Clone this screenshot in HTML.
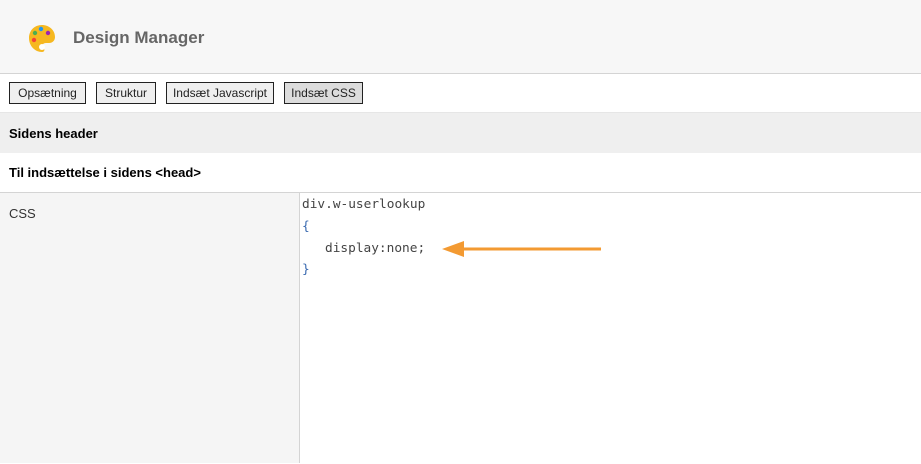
<!DOCTYPE html>
<html><head><style>
body{margin:0;width:921px;height:463px;overflow:hidden;font-family:"Liberation Sans",sans-serif;background:#fff;position:relative}
.hdr{position:absolute;left:0;top:0;width:921px;height:73px;background:#f7f7f7;border-bottom:1px solid #d4d4d4}
.title{position:absolute;left:73px;top:28px;font-size:17px;font-weight:bold;color:#666}
.btn{position:absolute;top:82px;height:20px;border:1px solid #222;background:#efefef;font-size:12px;line-height:20px;text-align:center;color:#222}
.band{position:absolute;left:0;top:112px;width:921px;height:40px;background:#efefef;border-top:1px solid #e6e6e6}
.lbl{position:absolute;left:9px;font-size:13px;font-weight:bold;color:#000}
.row{position:absolute;left:0;top:192px;width:921px;height:271px;border-top:1px solid #d4d4d4}
.left{position:absolute;left:0;top:193px;width:299px;height:270px;background:#f5f5f5;border-right:1px solid #d4d4d4}
.code{position:absolute;left:302px;font-family:"DejaVu Sans Mono","Liberation Mono",monospace;font-size:12.8px;color:#444}
</style></head><body>
<div class="hdr"></div>
<svg style="position:absolute;left:28px;top:24px" width="28" height="30" viewBox="0 0 28 30">
<path d="M14 1C6 1 1 7 1 14c0 8 6 14 13 14 3 0 3-3 1-5-1-2 0-4 3-4h3c4 0 6-3 6-6C27 6 21 1 14 1z" fill="#f6b820"/>
<circle cx="14" cy="23" r="3" fill="#fff"/>
<circle cx="7" cy="9" r="2.2" fill="#4caf50"/>
<circle cx="13" cy="5" r="2.2" fill="#2196f3"/>
<circle cx="20" cy="9" r="2.2" fill="#9c27b0"/>
<circle cx="6" cy="16" r="2.2" fill="#f44336"/>
</svg>
<div class="title">Design Manager</div>
<div class="btn" style="left:9px;width:75px">Opsætning</div>
<div class="btn" style="left:96px;width:58px">Struktur</div>
<div class="btn" style="left:166px;width:106px">Indsæt Javascript</div>
<div class="btn" style="left:284px;width:77px;background:#dcdcdc">Indsæt CSS</div>
<div class="band"></div>
<div class="lbl" style="top:126px">Sidens header</div>
<div class="lbl" style="top:165px">Til indsættelse i sidens &lt;head&gt;</div>
<div class="row"></div>
<div class="left"></div>
<div style="position:absolute;left:9px;top:206px;font-size:13px;color:#333">CSS</div>
<div class="code" style="top:197px">div.w-userlookup</div>
<div class="code" style="top:219px;color:#3a6ab0">{</div>
<div class="code" style="top:241px;left:325px">display:none;</div>
<div class="code" style="top:262px;color:#3a6ab0">}</div>
<svg style="position:absolute;left:440px;top:238px" width="165" height="22">
<line x1="20" y1="11" x2="161" y2="11" stroke="#f39a32" stroke-width="3"/>
<polygon points="2,11 24,3 24,19" fill="#f39a32"/>
</svg>
</body></html>
